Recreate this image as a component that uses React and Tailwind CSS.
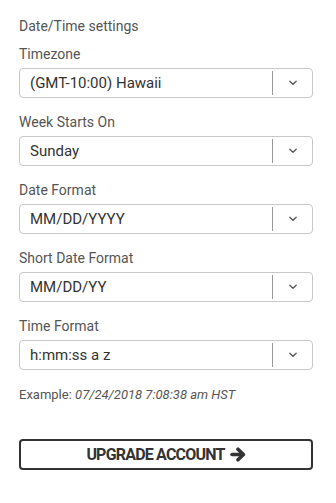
import React from "react";

const fields = [
  { label: "Timezone", value: "(GMT-10:00) Hawaii" },
  { label: "Week Starts On", value: "Sunday" },
  { label: "Date Format", value: "MM/DD/YYYY" },
  { label: "Short Date Format", value: "MM/DD/YY" },
  { label: "Time Format", value: "h:mm:ss a z" },
];

function Chevron() {
  return (
    <svg width="10" height="6" viewBox="0 0 10 6" fill="none">
      <path d="M1.8 1.3 L5 4.3 L8.2 1.3" stroke="#555" strokeWidth="1.3" strokeLinecap="round" strokeLinejoin="round" />
    </svg>
  );
}

function Arrow() {
  return (
    <svg width="16" height="15" viewBox="0 0 16 15" fill="none">
      <path d="M2 7.5 H12.5" stroke="#333" strokeWidth="3.6" strokeLinecap="round" />
      <path d="M8 2.2 L13.4 7.5 L8 12.8" stroke="#333" strokeWidth="3.6" strokeLinecap="round" strokeLinejoin="round" />
    </svg>
  );
}

function Select({ value }) {
  return (
    <div className="flex h-[30px] items-center rounded-[4px] border border-[#c8c8c8] bg-white">
      <div className="flex-1 pl-[10px] text-[15px] leading-[20px] text-[#333]">{value}</div>
      <div className="h-[24px] w-px bg-[#999]" />
      <div className="flex w-[39px] items-center justify-center">
        <Chevron />
      </div>
    </div>
  );
}

export default function App() {
  return (
    <div
      className="w-[336px] h-[503px] bg-white pl-[19px] pr-[23px] pt-[16px]"
      style={{ fontFamily: "Roboto, 'Noto Sans', sans-serif" }}
    >
      <div className="text-[14px] leading-[20px] text-[#555]">Date/Time settings</div>
      <div className="mt-[8px] flex flex-col gap-[14px]">
        {fields.map((f) => (
          <div key={f.label}>
            <div className="mb-[4px] text-[14px] leading-[20px] text-[#555]">{f.label}</div>
            <Select value={f.value} />
          </div>
        ))}
      </div>
      <div className="mt-[15px] text-[13px] leading-[20px] text-[#555]">
        Example: <span className="italic">07/24/2018 7:08:38 am HST</span>
      </div>
      <button className="mt-[34px] flex h-[31px] w-full items-center justify-center gap-[5px] rounded-[4px] border-2 border-[#333] bg-white text-[16px] font-bold tracking-[-0.8px] text-[#333]">
        <span>UPGRADE ACCOUNT</span>
        <Arrow />
      </button>
    </div>
  );
}
